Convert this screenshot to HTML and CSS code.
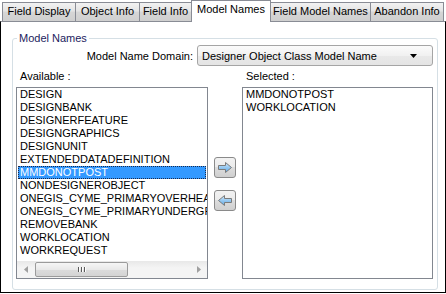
FILE: index.html
```html
<!DOCTYPE html>
<html>
<head>
  <meta charset="UTF-8">
  <link rel="stylesheet" href="styles.css">
</head>
<body>
  <div class="window">
    <div class="tabs">
      <div class="tab tab-display">Field Display</div>
      <div class="tab tab-object">Object Info</div>
      <div class="tab tab-field">Field Info</div>
      <div class="tab tab-active">Model Names</div>
      <div class="tab tab-fmodel">Field Model Names</div>
      <div class="tab tab-abandon">Abandon Info</div>
    </div>
    <div class="panel">
      <div class="group">
        <div class="group-title">Model Names</div>
        <div class="domain">
          <span>Model Name Domain:</span>
          <div class="combo">
            <span>Designer Object Class Model Name</span>
            <svg class="combo-arrow" width="7" height="4" viewBox="0 0 7 4"><path d="M0 0h7L3.5 4z" fill="#000"/></svg>
          </div>
        </div>
        <div class="lists">
          <div class="list-label">Available :</div>
          <div></div>
          <div class="list-label">Selected :</div>

          <div class="list">
            <div class="items">
              <div class="item">DESIGN</div>
              <div class="item">DESIGNBANK</div>
              <div class="item">DESIGNERFEATURE</div>
              <div class="item">DESIGNGRAPHICS</div>
              <div class="item">DESIGNUNIT</div>
              <div class="item">EXTENDEDDATADEFINITION</div>
              <div class="item item-selected">MMDONOTPOST</div>
              <div class="item">NONDESIGNEROBJECT</div>
              <div class="item">ONEGIS_CYME_PRIMARYOVERHEAD</div>
              <div class="item">ONEGIS_CYME_PRIMARYUNDERGROUND</div>
              <div class="item">REMOVEBANK</div>
              <div class="item">WORKLOCATION</div>
              <div class="item">WORKREQUEST</div>
            </div>
            <div class="hscroll">
              <div class="scroll-btn"><svg width="4" height="7" viewBox="0 0 4 7"><path d="M4 0v7L0 3.5z" fill="#a0a0a0"/></svg></div>
              <div class="scroll-track">
                <div class="thumb"><span class="grip"></span><span class="grip"></span><span class="grip"></span></div>
              </div>
              <div class="scroll-btn"><svg width="4" height="7" viewBox="0 0 4 7"><path d="M0 0v7L4 3.5z" fill="#a0a0a0"/></svg></div>
            </div>
          </div>

          <div class="movers">
            <div class="mover">
              <svg width="16" height="13" viewBox="0 0 16 13">
                <defs>
                  <linearGradient id="blue1" x1="0" y1="0" x2="0" y2="1">
                    <stop offset="0" stop-color="#cfe8fb"/>
                    <stop offset="1" stop-color="#5ea9e6"/>
                  </linearGradient>
                </defs>
                <path d="M1.5 4.5h7v-3l6 5-6 5v-3h-7z" fill="url(#blue1)" stroke="#7b7b7b"/>
              </svg>
            </div>
            <div class="mover">
              <svg width="16" height="13" viewBox="0 0 16 13">
                <defs>
                  <linearGradient id="blue2" x1="0" y1="0" x2="0" y2="1">
                    <stop offset="0" stop-color="#cfe8fb"/>
                    <stop offset="1" stop-color="#5ea9e6"/>
                  </linearGradient>
                </defs>
                <path d="M14.5 4.5h-7v-3l-6 5 6 5v-3h7z" fill="url(#blue2)" stroke="#7b7b7b"/>
              </svg>
            </div>
          </div>

          <div class="list">
            <div class="items">
              <div class="item">MMDONOTPOST</div>
              <div class="item">WORKLOCATION</div>
            </div>
          </div>
        </div>
      </div>
    </div>
  </div>
</body>
</html>
```

FILE: styles.css
```css
body {
  margin: 0;
  padding: 0;
  background: #ffffff;
  font-family: "Liberation Sans", Arial, sans-serif;
  font-size: 11px;
  color: #000000;
}

.window {
  width: 446px;
  height: 294px;
}

/* tab strip */
.tabs {
  display: flex;
  align-items: flex-end;
  height: 21px;
  padding-left: 2px;
}

.tab {
  box-sizing: border-box;
  height: 19px;
  line-height: 17px;
  text-align: center;
  white-space: nowrap;
  border: 1px solid #898c95;
  border-bottom: none;
  margin-right: -1px;
  background: linear-gradient(#f2f2f2, #e4e4e4 45%, #d6d6d6 50%, #cfcfcf);
}

.tab-display { width: 74px; }
.tab-object { width: 65px; }
.tab-field { width: 53px; }
.tab-fmodel { width: 101px; }
.tab-abandon { width: 74px; }

.tab-active {
  position: relative;
  z-index: 1;
  width: 80px;
  height: 22px;
  line-height: 17px;
  margin-bottom: -1px;
  background: #ffffff;
}

/* panel */
.panel {
  box-sizing: border-box;
  height: 272px;
  border: 1px solid #000000;
  border-top-color: #898c95;
  padding: 16px 7px 0 11px;
}

.group {
  box-sizing: border-box;
  height: 252px;
  border: 1px solid #d5dfe5;
  border-radius: 3px;
}

.group-title {
  width: max-content;
  margin: -7px 0 0 4px;
  padding: 0 2px;
  line-height: 13px;
  background: #ffffff;
  color: #1c1c5e;
}

.domain {
  display: flex;
  justify-content: flex-end;
  align-items: center;
  gap: 4px;
  padding-right: 4px;
}

.combo {
  box-sizing: border-box;
  width: 236px;
  height: 21px;
  display: flex;
  align-items: center;
  justify-content: space-between;
  padding: 0 15px 0 4px;
  border: 1px solid #a5a5a5;
  border-radius: 3px;
  background: linear-gradient(#fbfbfb, #f1f1f1 50%, #e9e9e9 50%, #e4e4e4);
}

.lists {
  display: grid;
  grid-template-columns: 192px 34px 191px;
  margin: 4px 0 0 3px;
}

.list-label {
  line-height: 13px;
  padding-left: 4px;
  margin-bottom: 4px;
}

.list {
  box-sizing: border-box;
  height: 192px;
  display: flex;
  flex-direction: column;
  border: 1px solid #828790;
  overflow: hidden;
}

.items {
  flex: 1;
  overflow: hidden;
}

.item {
  line-height: 13px;
  padding-left: 3px;
  white-space: nowrap;
}

.item-selected {
  margin: 0 1px;
  padding-left: 2px;
  background: #3399ff;
  color: #ffffff;
  outline: 1px dotted #1c2a4a;
  outline-offset: -1px;
}

/* horizontal scrollbar */
.hscroll {
  display: flex;
  height: 17px;
  background: linear-gradient(#e8e8e8, #f4f4f4 40%, #f4f4f4);
}

.scroll-btn {
  width: 17px;
  display: flex;
  align-items: center;
  justify-content: center;
}

.scroll-track {
  flex: 1;
  padding: 0 1px;
  display: flex;
  align-items: center;
}

.thumb {
  box-sizing: border-box;
  width: 93px;
  height: 15px;
  display: flex;
  align-items: center;
  justify-content: center;
  gap: 2px;
  border: 1px solid #9b9b9b;
  border-radius: 2px;
  background: linear-gradient(#f6f6f6, #e9e9e9 50%, #dcdcdc 50%, #d4d4d4);
}

.grip {
  width: 1px;
  height: 5px;
  background: #5a5a5a;
  box-shadow: 1px 0 0 #ffffff;
}

/* move buttons */
.movers {
  display: flex;
  flex-direction: column;
  align-items: center;
  gap: 12px;
  padding-top: 70px;
}

.mover {
  box-sizing: border-box;
  width: 22px;
  height: 21px;
  display: flex;
  align-items: center;
  justify-content: center;
  border: 1px solid #8a8a8a;
  border-radius: 3px;
  background: linear-gradient(#f2f2f2, #ebebeb 50%, #dddddd 50%, #cfcfcf);
}
```
